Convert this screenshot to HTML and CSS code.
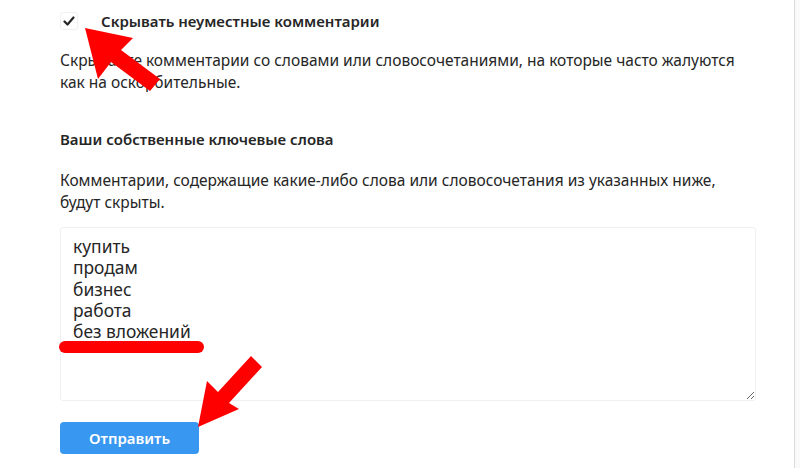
FILE: index.html
```html
<!DOCTYPE html>
<html lang="ru">
<head>
  <meta charset="UTF-8" />
  <title>Фильтр комментариев</title>
  <link rel="stylesheet" href="styles.css">
</head>
<body>
  <div class="panel">
    <label class="check-row">
      <span class="check-box">
        <svg width="12" height="10" viewBox="0 0 12 10"><path d="M1.5 5.5 L4.5 8.5 L10.5 1.5" fill="none" stroke="#262626" stroke-width="2.2" stroke-linecap="round" stroke-linejoin="round"/></svg>
      </span>
      <span class="check-title">Скрывать неуместные комментарии</span>
    </label>
    <p class="desc">Скрывайте комментарии со словами или словосочетаниями, на которые часто жалуются как на оскорбительные.</p>

    <h3 class="section-title">Ваши собственные ключевые слова</h3>
    <p class="desc desc-keywords">Комментарии, содержащие какие-либо слова или словосочетания из указанных ниже, будут скрыты.</p>

    <textarea class="keywords">купить
продам
бизнес
работа
без вложений</textarea>

    <button class="submit">Отправить</button>
  </div>

  <!-- red annotation marks drawn over the screenshot -->
  <svg class="marks" width="800" height="468" viewBox="0 0 800 468">
    <g fill="#ff0000">
      <polygon points="85,28 133,38 121,50 160,79 150,91 111,62 98,79"/>
      <polygon points="198,427 207,381 218,392 251,356 262,367 229,403 239,409"/>
      <rect x="59" y="341" width="145" height="12" rx="6"/>
    </g>
  </svg>
</body>
</html>
```

FILE: styles.css
```css
* {
  box-sizing: border-box;
}

body {
  margin: 0;
  background: #fafafa;
  font-family: 'Noto Sans', 'Open Sans', sans-serif;
  color: #262626;
}

.panel {
  width: 795px;
  min-height: 468px;
  background: #fff;
  border-right: 1px solid #dbdbdb;
  padding: 11px 38px 0 60px;
}

.check-row {
  display: flex;
  align-items: center;
  gap: 23px;
}

.check-box {
  width: 18px;
  height: 18px;
  border: 1px solid #f0f0f0;
  border-radius: 3px;
  display: flex;
  align-items: center;
  justify-content: center;
}

.check-title {
  font-size: 15px;
  font-weight: 600;
}

.desc {
  font-size: 15.5px;
  line-height: 22px;
  margin: 18px 0 0;
}

.desc-keywords {
  margin-top: 19px;
}

.section-title {
  font-size: 15px;
  font-weight: 600;
  margin: 35px 0 0;
  line-height: 22px;
}

.keywords {
  display: block;
  width: 100%;
  height: 174px;
  margin-top: 14px;
  padding: 8px 12px;
  border: 1px solid #efefef;
  border-radius: 3px;
  font-family: 'Noto Sans', 'Open Sans', sans-serif;
  font-size: 17.4px;
  line-height: 21.3px;
  color: #262626;
  resize: vertical;
  outline: none;
}

.submit {
  display: block;
  margin-top: 21px;
  width: 139px;
  height: 32px;
  border: none;
  border-radius: 4px;
  background: #3897f0;
  color: #fff;
  font-family: 'Noto Sans', 'Open Sans', sans-serif;
  font-size: 15px;
  font-weight: 600;
}

.marks {
  position: absolute;
  top: 0;
  left: 0;
  pointer-events: none;
}
```
